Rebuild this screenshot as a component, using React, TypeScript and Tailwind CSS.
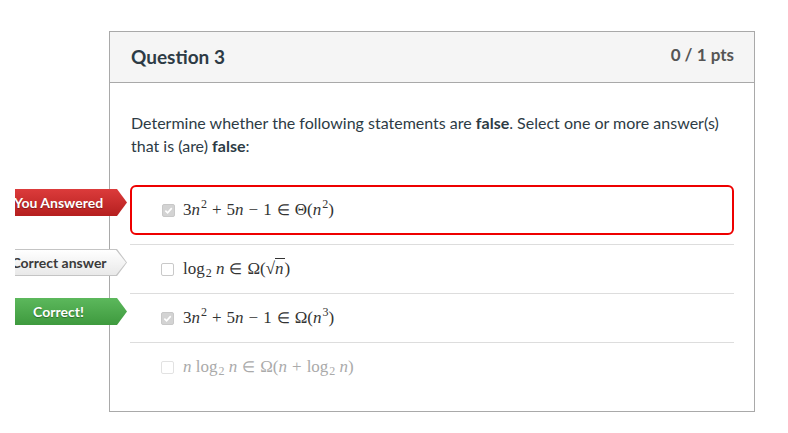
import React from "react";

type Tag = { label: string; kind: "wrong" | "answer" | "correct" };

function Banner({ tag }: { tag: Tag }) {
    const shape = "[clip-path:polygon(0_0,calc(100%-10px)_0,100%_50%,calc(100%-10px)_100%,0_100%)]";
    return (
        <div className="absolute top-[4px] left-[-115px] w-[112px] h-[27px] overflow-hidden">
            {tag.kind === "answer" ? (
                <div className={`ml-[-15px] w-[127px] h-[27px] bg-[#c4c4c4] relative ${shape}`}>
                    <div
                        className={`absolute inset-[1px] left-0 bg-gradient-to-b from-[#ffffff] to-[#e9e9e9] flex items-center justify-center pr-[8px] text-[14px] font-bold text-[#3a3a3a] ${shape}`}
                    >
                        {tag.label}
                    </div>
                </div>
            ) : (
                <div
                    className={`ml-[-15px] w-[127px] h-[27px] flex items-center justify-center pr-[10px] text-[14px] font-bold text-white [text-shadow:0_1px_1px_rgba(0,0,0,0.35)] bg-gradient-to-b ${shape} ${
                        tag.kind === "wrong" ? "from-[#dc3b3b] to-[#b51f1f]" : "from-[#5cb85c] to-[#3e9a3e]"
                    }`}
                >
                    {tag.label}
                </div>
            )}
        </div>
    );
}

function Box({ checked, faded }: { checked: boolean; faded?: boolean }) {
    return (
        <span
            className={`inline-flex w-[13px] h-[13px] rounded-[2px] border items-center justify-center shrink-0 ${
                checked ? "bg-[#d3d3d3] border-[#c8c8c8]" : faded ? "bg-white border-[#e2e2e2]" : "bg-white border-[#c9c9c9]"
            }`}
        >
            {checked && (
                <svg width="9" height="9" viewBox="0 0 10 10">
                    <path d="M1.5 5.2 L4 7.6 L8.6 2.4" fill="none" stroke="white" strokeWidth="1.8" />
                </svg>
            )}
        </span>
    );
}

const I = ({ children }: { children: React.ReactNode }) => <i className="italic">{children}</i>;
const Sup = ({ children }: { children: React.ReactNode }) => (
    <sup className="text-[12px] relative top-[-7px] ml-[1px]">{children}</sup>
);
const Op = ({ children }: { children: React.ReactNode }) => <span className="mx-[5px]">{children}</span>;
const In = () => <span className="mx-[5px] text-[15px]">∈</span>;
const Log2 = () => (
    <span>
        log<sub className="text-[12px] relative top-[3px] ml-[1px]">2</sub>
    </span>
);

export default function App() {
    const math = "font-['Liberation_Serif',serif] text-[17px] whitespace-nowrap";
    return (
        <div className="min-h-screen bg-white font-['Lato',sans-serif] pt-[31px] pl-[109px]">
            <div className="w-[646px] border border-[#a9a9a9]">
                <div className="h-[51px] bg-[#f5f5f5] border-b border-[#a9a9a9] flex items-center justify-between pl-[21px] pr-[20px]">
                    <span className="text-[19px] font-bold text-[#2d3b45]">Question 3</span>
                    <span className="text-[17px] font-bold text-[#555] mb-[5px]">0 / 1 pts</span>
                </div>
                <div className="px-[20px] pt-[28px] pb-[20px]">
                    <p className="text-[16px] leading-[23px] text-[#2d3b45] pl-[1px]">
                        Determine whether the following statements are <b>false</b>. Select one or more answer(s) that
                        is (are) <b>false</b>:
                    </p>

                    <div className="mt-[28px]">
                        <div className="relative mb-[9px]">
                            <Banner tag={{ label: "You Answered", kind: "wrong" }} />
                            <div className="h-[50px] border-2 border-[#ee0000] rounded-[6px] flex items-center pl-[30px] gap-[8px]">
                                <Box checked />
                                <span className={`${math} text-[#333]`}>
                                    3<I>n</I>
                                    <Sup>2</Sup>
                                    <Op>+</Op>5<I>n</I>
                                    <Op>−</Op>1<In />Θ(<I>n</I>
                                    <Sup>2</Sup>)
                                </span>
                            </div>
                        </div>

                        <div className="relative h-[49px] border-t border-[#dddddd] flex items-center pl-[31px] gap-[9px]">
                            <Banner tag={{ label: "Correct answer", kind: "answer" }} />
                            <Box checked={false} />
                            <span className={`${math} text-[#333]`}>
                                <Log2 /> <I>n</I>
                                <In />Ω(√<span className="border-t border-[#333] italic pr-[1px]">n</span>)
                            </span>
                        </div>

                        <div className="relative h-[49px] border-t border-[#dddddd] flex items-center pl-[31px] gap-[9px]">
                            <Banner tag={{ label: "Correct!", kind: "correct" }} />
                            <Box checked />
                            <span className={`${math} text-[#333]`}>
                                3<I>n</I>
                                <Sup>2</Sup>
                                <Op>+</Op>5<I>n</I>
                                <Op>−</Op>1<In />Ω(<I>n</I>
                                <Sup>3</Sup>)
                            </span>
                        </div>

                        <div className="relative h-[49px] border-t border-[#dddddd] flex items-center pl-[31px] gap-[9px]">
                            <Box checked={false} faded />
                            <span className={`${math} text-[#aaaaaa]`}>
                                <I>n</I> <Log2 /> <I>n</I>
                                <In />Ω(<I>n</I>
                                <Op>+</Op>
                                <Log2 /> <I>n</I>)
                            </span>
                        </div>
                    </div>
                </div>
            </div>
        </div>
    );
}
